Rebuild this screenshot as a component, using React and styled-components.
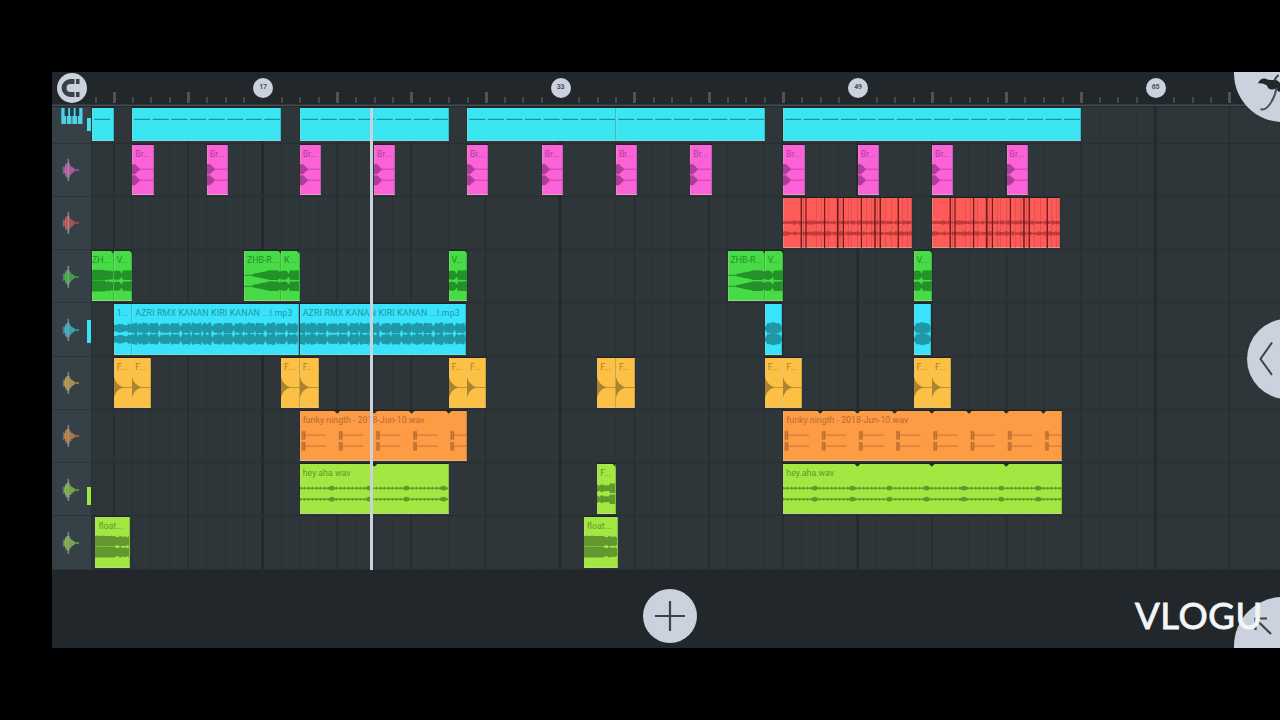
import React from "react";
import styled, { createGlobalStyle } from "styled-components";

const BAR = 18.6;
const FIRST_BAR = 7.833;
const LANE_HEIGHT = 53.25;

// bar number -> px inside the lanes
const toX = (bar) => (bar - FIRST_BAR) * BAR;

const LONG_NAME = "AZRI RMX KANAN KIRI KANAN ...l.mp3";
const FUNKY = "funky ningth - 2018-Jun-10.wav";

const repeat = (starts, length, rest) =>
  starts.map((start) => ({ start, length, ...rest }));

const tracks = [
  {
    id: "keys",
    color: "#3be5f1",
    ink: "#168a98",
    wave: "midi",
    meter: [11, 13],
    clips: [
      { start: 7.833, length: 1.167 },
      { start: 10, length: 8 },
      { start: 19, length: 8 },
      { start: 28, length: 8 },
      { start: 36, length: 8 },
      { start: 45, length: 16 },
    ],
  },
  {
    id: "break",
    color: "#fc62d8",
    ink: "#ab3f95",
    wave: "hit",
    clips: repeat([10, 14, 19, 23, 28, 32, 36, 40, 45, 49, 53, 57], 1.15, {
      label: "Br...",
    }),
  },
  {
    id: "slices",
    color: "#fd5b57",
    ink: "#a92f30",
    wave: "slices",
    clips: repeat([45, 53], 6.9, {}),
  },
  {
    id: "zhb",
    color: "#47dc45",
    ink: "#24912a",
    wave: "swell",
    clips: [
      { start: 7.833, length: 1.167, label: "ZH...", wave: "full", corner: true, flush: true },
      { start: 9, length: 1, label: "V...", wave: "gap", corner: true },
      { start: 16, length: 2, label: "ZHB-R...", corner: true },
      { start: 18, length: 1, label: "K...", wave: "gap", corner: true },
      { start: 27, length: 1, label: "V...", wave: "gap", corner: true },
      { start: 42, length: 2, label: "ZHB-R...", corner: true },
      { start: 44, length: 1, label: "V...", wave: "gap", corner: true },
      { start: 52, length: 1, label: "V...", wave: "gap", corner: true },
    ],
  },
  {
    id: "azri",
    color: "#38e3fb",
    ink: "#1f98a8",
    wave: "loud",
    meter: [17, 23],
    clips: [
      { start: 9, length: 1, label: "1...", wave: "soft" },
      { start: 10, length: 8.95, label: LONG_NAME, wide: true },
      { start: 19, length: 8.95, label: LONG_NAME, wide: true },
      { start: 44, length: 0.92, wave: "blob" },
      { start: 52, length: 0.92, wave: "blob" },
    ],
  },
  {
    id: "fx",
    color: "#fcc144",
    ink: "#a98432",
    wave: "spike",
    clips: repeat([9, 10, 18, 19, 27, 28, 35, 36, 44, 45, 52, 53], 1.03, {
      label: "F...",
    }),
  },
  {
    id: "funky",
    color: "#fe9b45",
    ink: "#b96a30",
    wave: "stabs",
    clips: [
      { start: 19, length: 9, label: FUNKY, notch: 2 },
      { start: 45, length: 15, label: FUNKY, notch: 2 },
    ],
  },
  {
    id: "hey",
    color: "#a3e743",
    ink: "#5f9a2c",
    wave: "quiet",
    meter: [24, 18],
    clips: [
      { start: 19, length: 8, label: "hey.aha.wav", notch: 4 },
      { start: 35, length: 1, label: "F...", wave: "rise", corner: true },
      { start: 45, length: 15, label: "hey.aha.wav", notch: 4 },
    ],
  },
  {
    id: "float",
    color: "#a3e743",
    ink: "#62982f",
    wave: "full",
    clips: [
      { start: 8.02, length: 1.88, label: "float..." },
      { start: 34.28, length: 1.82, label: "float..." },
    ],
  },
];

const noise = (n) => {
  const v = Math.sin(n * 12.9898 + 4.1) * 43758.5453;
  return v - Math.floor(v);
};

const envelopes = {
  hit: (x) => (x < 3 ? 5 : x < 8 ? 5 - (x - 3) * 0.95 : 0.4),
  swell: (x, w) => {
    const p = x / w;
    if (p < 0.22) return 0.5;
    if (p > 0.93) return 3.6;
    return Math.min(4.6, 0.8 + (p - 0.22) * 8) + noise(x) * 0.5;
  },
  full: (x, w) =>
    x > w * 0.6 ? 3.6 + noise(x) * 2.2 : 5.1 + noise(x) * 0.4,
  gap: (x, w) => {
    const p = x / w;
    if (p < 0.33) return 4 + noise(x) * 0.8;
    if (p < 0.48) return 1.2 + noise(x);
    return 4.4 + noise(x) * 0.8;
  },
  rise: (x, w) => (x > w * 0.65 ? 4.8 : 2 + noise(x + 3) * 2.2),
  soft: (x) => 2.6 + noise(Math.floor(x / 2)) * 2,
  loud: (x) => {
    const beat = (x + 5) % 10.6;
    if (beat < 1.4) return 2.2;
    return 4.2 + noise(Math.floor(x / 1.5)) * 1.6;
  },
  blob: (x, w) => {
    const p = Math.abs(x - w / 2) / (w / 2);
    return p > 0.85 ? 2.2 : 5.6 - p * 1.6 + noise(x) * 0.6;
  },
  quiet: (x) => {
    const beat = x % (BAR * 2);
    if (beat > 29 && beat < 35) return 2.5 - Math.abs(beat - 32) * 0.35;
    return x % 4 < 2 ? 1.3 : 0.5;
  },
};

const wavePath = (kind, w, cy) => {
  const top = [];
  const bottom = [];
  for (let x = 0; x <= w; x += 1) {
    const h = envelopes[kind](x, w);
    top.push(`${x},${(cy - h).toFixed(1)}`);
    bottom.unshift(`${x},${(cy + h).toFixed(1)}`);
  }
  return `M${top.join("L")}L${bottom.join("L")}Z`;
};

const steps = (w, size) =>
  Array.from({ length: Math.ceil(w / size) }, (_, i) => i * size);

const CUTS = [
  [17.6, 1.4], [22.4, 1.2], [41, 1.2], [53.8, 1.8], [59.8, 1.2], [77.8, 1.2], [91.2, 1.5], [96.6, 1.4], [114.6, 1.4],
];
const FAINT_CUTS = [20, 33, 38, 45, 56.8, 65, 68, 74, 83, 88, 94, 102, 108, 119, 124];

function Wave({ kind, width, ink }) {
  if (kind === "midi") {
    return (
      <WaveSvg>
        {steps(width, BAR).map((x) => (
          <rect key={x} x={x + 2.2} y={10.8} width={Math.max(0, Math.min(16, width - x - 3))} height={1.1} fill={ink} />
        ))}
      </WaveSvg>
    );
  }
  if (kind === "spike") {
    return (
      <WaveSvg>
        <path d={`M0 19 Q2 27 9 28.9 H${width} V29.8 H9 Q2 31.5 0 39.5Z`} fill={ink} />
      </WaveSvg>
    );
  }
  if (kind === "stabs") {
    return (
      <WaveSvg>
        {steps(width, BAR * 2).map((x) => (
          <g key={x} fill={ink}>
            {[24, 35].map((cy) => (
              <React.Fragment key={cy}>
                <rect x={x + 1.4} y={cy - 3.6} width={4} height={8} opacity={0.55} />
                <rect x={x + 2} y={cy - 4.2} width={1.2} height={9} opacity={0.8} />
                <rect x={x + 3.9} y={cy - 4} width={1.2} height={8.8} opacity={0.8} />
                <rect x={x + 5} y={cy - 0.3} width={21} height={0.8} />
              </React.Fragment>
            ))}
          </g>
        ))}
      </WaveSvg>
    );
  }
  if (kind === "slices") {
    return (
      <WaveSvg>
        {[24.5, 35.5].map((cy) =>
          steps(width, 2).map((x) => {
            const h = 0.8 + noise(x + cy) * 1.5;
            return <rect key={`${cy}-${x}`} x={x} y={cy - h} width={1.8} height={h * 2} fill={ink} opacity={0.8} />;
          })
        )}
        {FAINT_CUTS.map((x) => (
          <rect key={x} x={x} width={0.8} height={50} fill="#8f2528" opacity={0.25} />
        ))}
        {CUTS.map(([x, w]) => (
          <rect key={x} x={x} width={w} height={50} fill="#6d1f22" />
        ))}
      </WaveSvg>
    );
  }
  return (
    <WaveSvg>
      <path d={wavePath(kind, width, 24.2)} fill={ink} />
      <path d={wavePath(kind, width, 35.2)} fill={ink} />
    </WaveSvg>
  );
}

function Clip({ clip, track }) {
  const width = clip.length * BAR;
  const notches = clip.notch ? steps(width, clip.notch * BAR).slice(1) : [];
  return (
    <ClipBox
      $color={track.color}
      $short={track.wave === "midi"}
      style={{ left: toX(clip.start), width }}
    >
      <Wave kind={clip.wave || track.wave} width={width} ink={track.ink} />
      {clip.label && (
        <ClipLabel $ink={track.ink} $flush={clip.flush} $wide={clip.wide}>
          {clip.label}
        </ClipLabel>
      )}
      <WaveSvg>
        {notches.map((x) => (
          <path key={x} d={`M${x - 2.8} 0h5.6l-2.8 2.8z`} fill="#2b2a1c" />
        ))}
        {clip.corner && <path d={`M${width - 2.8} 0h2.8v3z`} fill="#1f3a22" />}
      </WaveSvg>
    </ClipBox>
  );
}

function TrackIcon({ track }) {
  if (track.wave === "midi") {
    return (
      <svg width="22" height="17" viewBox="0 0 22 17">
        {[0, 5.5, 11, 16.5].map((x) => (
          <rect key={x} x={x + 0.3} y="0" width="4.7" height="16" fill="#4fd3e2" />
        ))}
        {[3.6, 9.1, 14.6].map((x) => (
          <rect key={x} x={x} y="0" width="3.6" height="8" fill="#203d46" />
        ))}
      </svg>
    );
  }
  return (
    <svg width="20" height="24" viewBox="0 0 20 24">
      <path d="M1.800 8.500h1.200v7.500H1.800zM4 6h1.300v12.500H4z" fill="#87908f" opacity="0.6" />
      <path
        d="M3 9h1V7h1.300V5h3.400v2.500h1.600V9h1.600v1h1.600v1.200h4.500v1.600h-4.500V14h-1.600v1.200h-1.600V17H8.700v2.500H5.300V17H4v-2H3z"
        fill={track.color}
        opacity="0.6"
      />
      <path d="M6.600 1h1.500v22H6.600z" fill="#9aa3a4" opacity="0.75" />
    </svg>
  );
}

const bars = Array.from({ length: 62 }, (_, i) => i + 8);

export default function App() {
  return (
    <Page>
      <GlobalStyle />
      <Frame>
        <Ruler>
          <Snap>
            <svg width="22" height="20" viewBox="0 0 22 20">
              <path d="M13.500 3.600H9.500a6.400 6.400 0 0 0 0 12.800H13.500" fill="none" stroke="#3b4149" strokeWidth="5" />
              <path d="M15 1.100h3.500v5H15zM15 13.900h3.500v5H15z" fill="#3b4149" />
            </svg>
          </Snap>
          <Scale>
            {bars.map((bar) => (
              <ScaleCell key={bar}>
                {bar % 16 === 1 ? (
                  <Marker>{bar}</Marker>
                ) : (
                  <Tick $major={bar % 4 === 1} />
                )}
              </ScaleCell>
            ))}
          </Scale>
        </Ruler>
        <Playlist>
          {tracks.map((track) => (
            <Track key={track.id} $first={track.wave === "midi"}>
              <TrackHead $first={track.wave === "midi"}>
                <TrackIcon track={track} />
                {track.meter && (
                  <Meter $color={track.color} $top={track.meter[0]} $height={track.meter[1]} />
                )}
              </TrackHead>
              <Lane>
                {track.clips.map((clip) => (
                  <Clip key={clip.start} clip={clip} track={track} />
                ))}
              </Lane>
            </Track>
          ))}
          <Playhead />
        </Playlist>
        <Footer>
          <AddButton>
            <svg width="32" height="32" viewBox="0 0 32 32">
              <path d="M16 1v30M1 16h30" stroke="#3c424a" strokeWidth="2.200" />
            </svg>
          </AddButton>
        </Footer>
        <EdgeButton $size={97} $x={1182} $y={-47}>
          <svg width="97" height="97" viewBox="0 0 97 97">
            <path
              d="M24 58.500Q26 53 31 53.500Q36 56 41 54.500Q47 57 51 64L45 67Q42 63 39 64.500Q34 65 33 60.500Q28 57.500 24 58.500Z"
              fill="#23282d"
            />
            <path d="M40.500 55.500Q42 52 44.500 50" fill="none" stroke="#3b4147" strokeWidth="2" />
            <path d="M42.500 63Q41 72 36 79T26.500 84" fill="none" stroke="#4c5259" strokeWidth="2" />
          </svg>
        </EdgeButton>
        <EdgeButton $size={80} $x={1195} $y={247}>
          <svg width="80" height="80" viewBox="0 0 80 80">
            <path d="M25 23.500L13.500 40 25 56" fill="none" stroke="#3c424a" strokeWidth="2" />
          </svg>
        </EdgeButton>
        <EdgeButton $size={98} $x={1182} $y={525}>
          <svg width="98" height="98" viewBox="0 0 98 98">
            <path d="M37 37L22 22.500M21.500 33V21.500H33" fill="none" stroke="#3c424a" strokeWidth="2.200" />
          </svg>
        </EdgeButton>
        <Watermark>VLOGU</Watermark>
      </Frame>
    </Page>
  );
}

const GlobalStyle = createGlobalStyle`
  * {
    box-sizing: border-box;
  }
  body {
    margin: 0;
    background: #000;
    overflow: hidden;
  }
`;

const Page = styled.div`
  width: 1280px;
  height: 720px;
  padding: 72px 0 72px 52px;
  background: #000;
  font-family: Roboto, "Open Sans", sans-serif;
`;

const Frame = styled.div`
  position: relative;
  display: flex;
  flex-direction: column;
  width: 1228px;
  height: 576px;
  overflow: hidden;
  background: #21272a;
`;

const Ruler = styled.div`
  display: flex;
  flex: none;
  height: 35px;
  border-bottom: 1px solid #23292c;
  box-shadow: inset 0 -1.5px 0 #454b4f;
`;

const Snap = styled.div`
  display: flex;
  flex: none;
  align-items: center;
  justify-content: center;
  width: 30px;
  height: 30px;
  margin: 1px 0 0 5px;
  border-radius: 50%;
  background: #cbd2dd;
`;

/* cells are centred on their bar line, so the first one starts half a bar early */
const Scale = styled.div`
  display: flex;
  flex: 1;
  padding-bottom: 3px;
  margin-left: -0.6px;
`;

const ScaleCell = styled.div`
  display: flex;
  flex: none;
  align-items: flex-end;
  justify-content: center;
  width: ${BAR}px;
`;

const Tick = styled.div`
  width: ${(props) => (props.$major ? 3 : 2)}px;
  height: ${(props) => (props.$major ? 11 : 6)}px;
  background: ${(props) => (props.$major ? "#4d5356" : "#42484b")};
`;

const Marker = styled.div`
  display: flex;
  flex: none;
  align-items: center;
  justify-content: center;
  align-self: flex-start;
  width: 20px;
  height: 20px;
  margin-top: 6px;
  padding-bottom: 2px;
  border-radius: 50%;
  background: #cbd2dd;
  color: #4a5059;
  font-size: 7px;
  font-weight: 700;
  letter-spacing: -0.3px;
`;

const Playlist = styled.div`
  position: relative;
  flex: none;
`;

const Track = styled.div`
  display: flex;
  height: ${(props) => (props.$first ? 36.5 : LANE_HEIGHT)}px;
`;

const TrackHead = styled.div`
  display: flex;
  flex: none;
  align-items: ${(props) => (props.$first ? "flex-start" : "center")};
  justify-content: space-between;
  width: 40px;
  padding: ${(props) => (props.$first ? "1px 0 0 9px" : "1px 0 0 9px")};
  background: #364047;
  border-right: 1px solid #282f33;
  border-bottom: 1px solid #2c353a;
`;

const Meter = styled.div`
  align-self: flex-start;
  width: 4px;
  height: ${(props) => props.$height}px;
  margin-top: ${(props) => props.$top - 1}px;
  background: ${(props) => props.$color};
`;

const Lane = styled.div`
  position: relative;
  flex: 1;
  border-bottom: 1px solid #272d30;
  background-color: #2f3639;
  background-image: linear-gradient(90deg, #23292c 3px, transparent 3px),
    linear-gradient(90deg, #272e31 2px, transparent 2px),
    linear-gradient(90deg, #2a3033 1px, transparent 1px);
  background-size: ${BAR * 16}px 100%, ${BAR * 4}px 100%, ${BAR}px 100%;
  background-position: ${toX(17) - 1.5}px 0, ${toX(9) - 1}px 0, ${toX(8) - 0.5}px 0;
`;

const ClipBox = styled.div`
  position: absolute;
  top: 1px;
  height: ${(props) => (props.$short ? 32.5 : 50.3)}px;
  overflow: hidden;
  background: ${(props) => props.$color};
  box-shadow: inset 0.6px -1px 0 rgba(205, 205, 180, 0.55),
    inset -0.6px 0 0 rgba(0, 60, 60, 0.35), 0 -1px 0 #1d2526;
`;

const ClipLabel = styled.div`
  position: relative;
  padding: 3px 0 0 ${(props) => (props.$flush ? 0 : 3)}px;
  color: ${(props) => props.$ink};
  font-size: 8.8px;
  line-height: 12px;
  letter-spacing: ${(props) => (props.$wide ? "0.14px" : "0")};
  white-space: nowrap;
`;

const WaveSvg = styled.svg`
  position: absolute;
  inset: 0;
  width: 100%;
  height: 100%;
`;

const Playhead = styled.div`
  position: absolute;
  top: 1px;
  left: 318px;
  width: 3px;
  height: 462px;
  background: #cbd2dd;
`;

const Footer = styled.div`
  display: flex;
  flex: 1;
  align-items: center;
  justify-content: center;
  padding: 14px 0 0 8px;
`;

const AddButton = styled.div`
  display: flex;
  align-items: center;
  justify-content: center;
  width: 54px;
  height: 54px;
  border-radius: 50%;
  background: #cbd2dd;
`;

const EdgeButton = styled.div`
  position: absolute;
  left: ${(props) => props.$x}px;
  top: ${(props) => props.$y}px;
  width: ${(props) => props.$size}px;
  height: ${(props) => props.$size}px;
  border-radius: 50%;
  background: #cbd2dd;
`;

const Watermark = styled.div`
  position: absolute;
  left: 1083px;
  top: 521px;
  color: #f3f5f6;
  font-family: Lato, sans-serif;
  font-size: 36.5px;
  line-height: 44px;
  letter-spacing: 0.6px;
  -webkit-text-stroke: 0.9px #f3f5f6;
`;
